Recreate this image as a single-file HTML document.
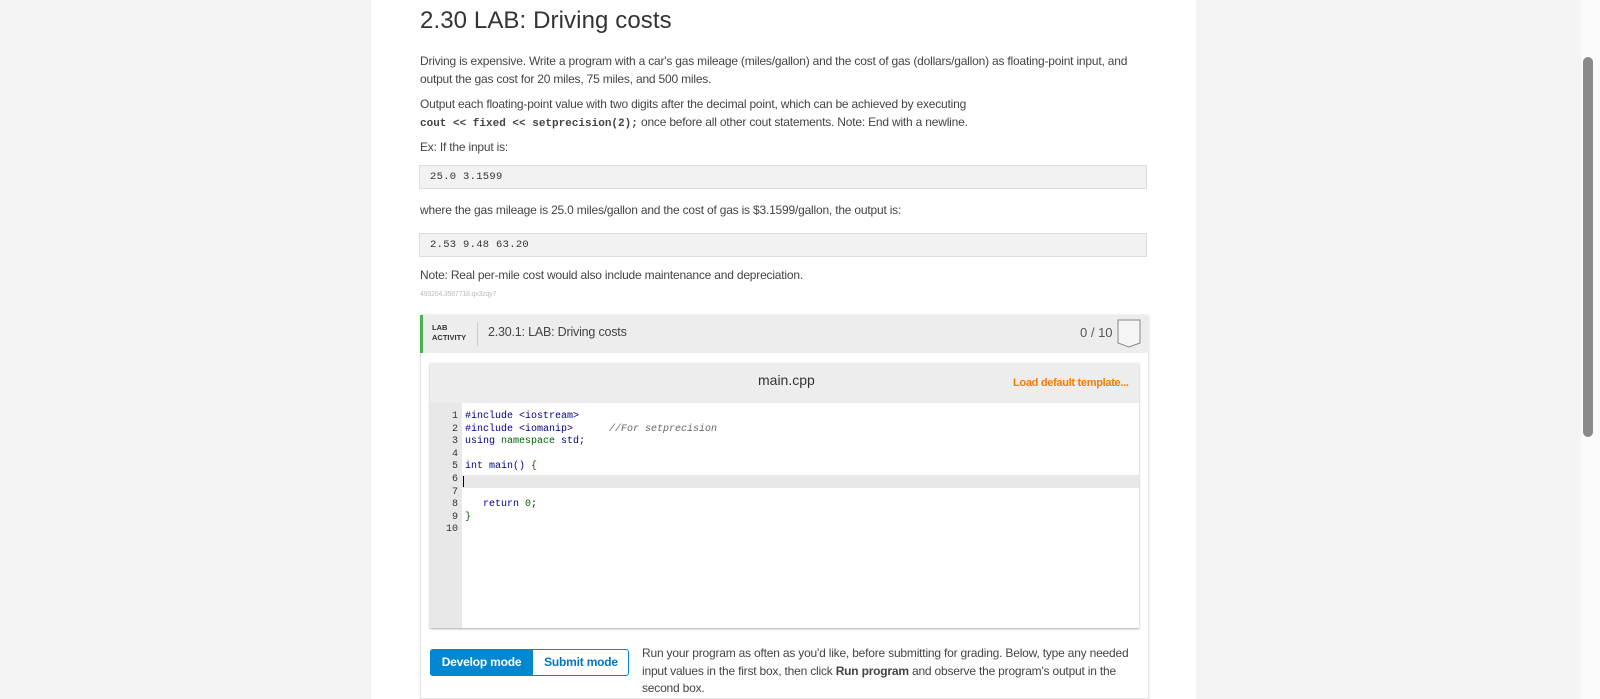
<!DOCTYPE html>
<html><head><meta charset="utf-8"><style>
*{box-sizing:border-box;margin:0;padding:0}
body{width:1600px;height:699px;overflow:hidden;background:#f4f4f4;font-family:"Liberation Sans",sans-serif;color:#333;position:relative}
.panel{position:absolute;left:371px;top:0;width:825px;height:699px;background:#fff}
.abs{position:absolute}
h1{position:absolute;left:420px;top:7px;font-size:24px;font-weight:normal;color:#333;letter-spacing:0.1px}
.p{position:absolute;left:420px;font-size:12px;letter-spacing:-0.2px;line-height:17.5px;color:#444;width:735px}
.mono{font-family:"Liberation Mono",monospace;font-size:11px;letter-spacing:0}
.box{position:absolute;left:419px;width:728px;height:24px;background:#f2f2f2;border:1px solid #ddd;font-family:"Liberation Mono",monospace;font-size:10.5px;color:#333;padding:5px 10px;letter-spacing:0.3px}
.code{position:absolute;font-family:"Liberation Mono",monospace;font-size:10px;line-height:12.6px;white-space:pre}
</style></head><body>
<div class="panel"></div>
<div class="abs" style="left:1581px;top:0;width:19px;height:699px;background:#fafafa"></div>
<div class="abs" style="left:1583px;top:57px;width:10px;height:380px;background:#8a8a8a;border-radius:5px"></div>
<h1>2.30 LAB: Driving costs</h1>
<div class="p" style="top:53px">Driving is expensive. Write a program with a car's gas mileage (miles/gallon) and the cost of gas (dollars/gallon) as floating-point input, and output the gas cost for 20 miles, 75 miles, and 500 miles.</div>
<div class="p" style="top:96px">Output each floating-point value with two digits after the decimal point, which can be achieved by executing<br><b class="mono" style="font-weight:bold">cout &lt;&lt; fixed &lt;&lt; setprecision(2);</b> once before all other cout statements. Note: End with a newline.</div>
<div class="p" style="top:139px">Ex: If the input is:</div>
<div class="box" style="top:165px">25.0 3.1599</div>
<div class="p" style="top:202px">where the gas mileage is 25.0 miles/gallon and the cost of gas is $3.1599/gallon, the output is:</div>
<div class="box" style="top:233px">2.53 9.48 63.20</div>
<div class="p" style="top:267px">Note: Real per-mile cost would also include maintenance and depreciation.</div>
<div class="p" style="top:290px;font-size:7px;line-height:9px;color:#bbb">493204.3587718.qx3zqy7</div>

<div class="abs" style="left:420px;top:315px;width:729px;height:384px;border:1px solid #e6e6e6;border-top:none;box-shadow:0 0 2px #ddd"></div>
<div class="abs" style="left:420px;top:315px;width:729px;height:38px;background:#ededed;border-left:3px solid #4caf50"></div>
<div class="abs" style="left:432px;top:323px;font-size:7.5px;font-weight:bold;line-height:10px;color:#333">LAB<br>ACTIVITY</div>
<div class="abs" style="left:477px;top:322px;width:1px;height:24px;background:#ccc"></div>
<div class="abs" style="left:488px;top:325px;font-size:12.5px;letter-spacing:-0.2px;color:#444">2.30.1: LAB: Driving costs</div>
<div class="abs" style="left:1080px;top:325px;font-size:13px;color:#555">0 / 10</div>
<svg class="abs" style="left:1117px;top:319px" width="25" height="30"><path d="M1 1H23V24L12 28L1 24Z" fill="#f5f5f5" stroke="#888"/></svg>

<div class="abs" style="left:430px;top:363px;width:709px;height:265px;background:#fff;box-shadow:0 1px 2px #aaa"></div>
<div class="abs" style="left:430px;top:363px;width:709px;height:40px;background:#ededed"></div>
<div class="abs" style="left:758px;top:372px;font-size:14px;color:#333">main.cpp</div>
<div class="abs" style="left:1013px;top:377px;font-size:11px;font-weight:bold;letter-spacing:-0.3px;color:#f57c00">Load default template...</div>
<div class="abs" style="left:430px;top:403px;width:32px;height:225px;background:#e8e8e8"></div>
<div class="abs" style="left:430px;top:475px;width:709px;height:13px;background:#e8e8e8"></div>
<div class="abs" style="left:463px;top:476px;width:1px;height:11px;background:#000"></div>
<div class="code" style="left:436px;top:411px;width:22px;text-align:right;color:#333"> 1
 2
 3
 4
 5
 6
 7
 8
 9
10</div>
<div class="code" style="left:465px;top:411px;color:#00008b"><span>#include &lt;iostream&gt;</span>
#include &lt;iomanip&gt;      <i style="color:#666">//For setprecision</i>
using <span style="color:#006400">namespace</span> std;

int main() <span style="color:#006400">{</span>


   return <span style="color:#006400">0</span>;
<span style="color:#006400">}</span>
</div>

<div class="abs" style="left:430px;top:649px;width:199px;height:27px;border:1px solid #0288d1;border-radius:3px;background:#fff"></div>
<div class="abs" style="left:430px;top:649px;width:103px;height:27px;background:#0288d1;border-radius:3px 0 0 3px;color:#fff;font-size:12px;letter-spacing:-0.2px;font-weight:bold;text-align:center;line-height:27px">Develop mode</div>
<div class="abs" style="left:533px;top:649px;width:96px;height:27px;color:#0277bd;font-size:12px;letter-spacing:-0.2px;font-weight:bold;text-align:center;line-height:27px">Submit mode</div>
<div class="p" style="left:642px;top:645px;width:500px;font-size:12px;line-height:17.5px">Run your program as often as you'd like, before submitting for grading. Below, type any needed input values in the first box, then click <b>Run program</b> and observe the program's output in the second box.</div>
</body></html>
